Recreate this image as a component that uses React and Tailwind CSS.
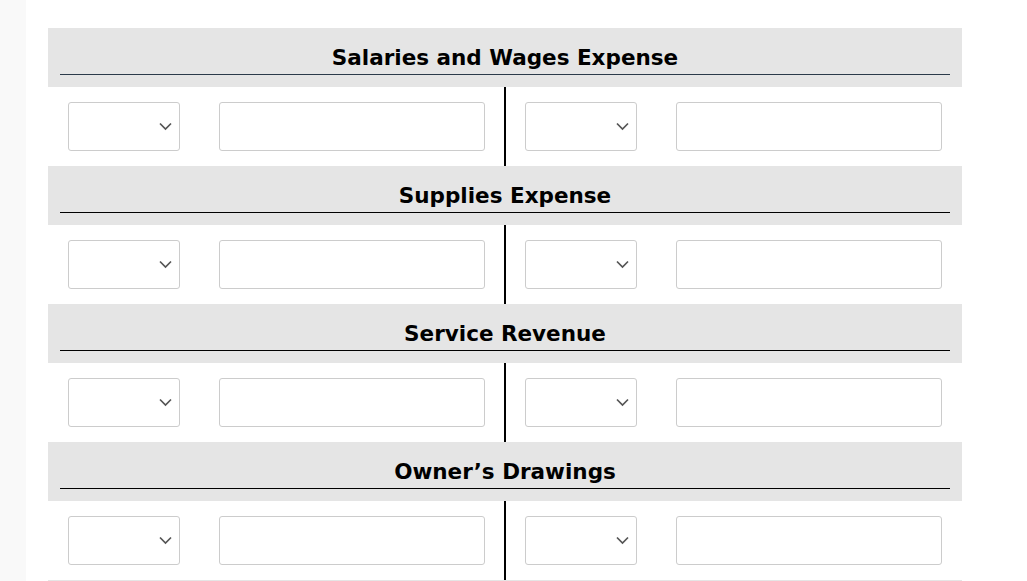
import React from 'react';

const accounts = [
  { title: 'Salaries and Wages Expense', line: 'border-[#2b3a4a]' },
  { title: 'Supplies Expense', line: 'border-black' },
  { title: 'Service Revenue', line: 'border-black' },
  { title: 'Owner’s Drawings', line: 'border-black' },
];

const Chevron = () => (
  <svg className="absolute right-[7px] top-[19px] w-[13px] h-[9px]" viewBox="0 0 13 9" fill="none">
    <path d="M1 1.5 L6.5 7 L12 1.5" stroke="#555" strokeWidth="1.7" />
  </svg>
);

const SelectBox = () => (
  <div className="relative w-[112px] h-[49px] bg-white border border-[#cccccc] rounded-[3px] shrink-0">
    <Chevron />
  </div>
);

const InputBox = () => (
  <div className="w-[266px] h-[49px] bg-white border border-[#cccccc] rounded-[3px] shrink-0" />
);

const Side = ({ right }) => (
  <div className={`w-[456px] shrink-0 flex items-center gap-[39px] ${right ? 'pl-[19px]' : 'pl-[20px]'}`}>
    <SelectBox />
    <InputBox />
  </div>
);

const App = () => {
  return (
    <div className="flex h-[581px] overflow-hidden bg-white" style={{ fontFamily: '"DejaVu Sans", Verdana, sans-serif' }}>
      <div className="w-[26px] shrink-0 bg-[#f9f9f9]" />
      <div className="w-[914px] ml-[22px] pt-[28px] shrink-0">
        {accounts.map((a) => (
          <div key={a.title}>
            <div className="h-[59px] bg-[#e5e5e5] px-[12px] pt-[12px]">
              <div className={`h-[35px] border-b ${a.line} text-center text-[21.5px] font-bold leading-[36px] text-black`}>
                {a.title}
              </div>
            </div>
            <div className="flex h-[79px]">
              <Side />
              <div className="w-[2px] bg-black shrink-0" />
              <Side right />
            </div>
          </div>
        ))}
        <div className="h-px bg-[#e5e5e5]" />
      </div>
    </div>
  );
};

export default App;
